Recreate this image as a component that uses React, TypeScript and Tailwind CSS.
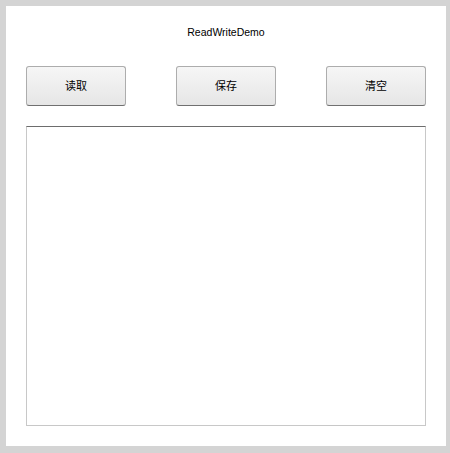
const buttons = ["读取", "保存", "清空"];

export default function App() {
  return (
    <div className="flex h-[453px] w-[450px] bg-[#d4d4d4] pb-[7px] pl-[6px] pr-[4px] pt-[6px]">
      <div
        className="flex flex-1 flex-col bg-white px-[20px]"
        style={{fontFamily: '"Liberation Sans", "Noto Sans CJK SC", sans-serif'}}
      >
        <p className="mt-[20px] h-[12px] text-center text-[10.5px] leading-[12px] text-black">
          ReadWriteDemo
        </p>

        <div className="mt-[28px] flex justify-between">
          {buttons.map((label) => (
            <button
              key={label}
              className="flex h-[40px] w-[100px] items-center justify-center rounded-[3px] border border-[#adadad] border-b-[#707070] bg-gradient-to-b from-[#f6f6f6] to-[#e6e6e6] text-[11px] text-black"
            >
              {label}
            </button>
          ))}
        </div>

        <textarea className="mt-[20px] h-[300px] w-[400px] resize-none border border-[#c8c8c8] border-t-[#6d6d6d] bg-white outline-none" />
      </div>
    </div>
  );
}
